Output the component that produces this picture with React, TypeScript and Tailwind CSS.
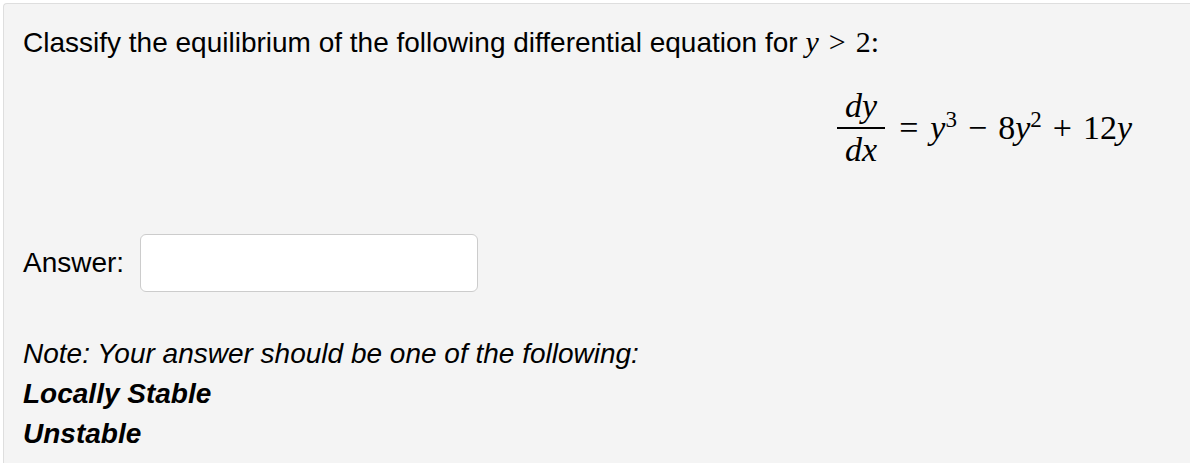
import React from "react";

const sans = { fontFamily: '"Liberation Sans", Arial, sans-serif' };
const serif = { fontFamily: '"Liberation Serif", "Times New Roman", serif' };

function Var({ children }: { children: React.ReactNode }) {
  return <span className="italic">{children}</span>;
}

function Op({ children }: { children: React.ReactNode }) {
  return <span className="mx-[11px]">{children}</span>;
}

export default function App() {
  return (
    <div className="min-h-[463px] bg-white pl-[3px] pt-[3px]" style={sans}>
      <div className="min-h-[460px] rounded-tl-[4px] border-l border-t border-[#dedede] bg-[#f4f4f4] pl-[19px] pt-[22px] text-[28px] leading-[32px] text-black">
        <p>
          Classify the equilibrium of the following differential equation for{" "}
          <span style={serif} className="text-[30px]">
            <Var>y</Var>
            <span className="mx-[10px]">&gt;</span>2:
          </span>
        </p>

        <div className="flex justify-end pr-[58px] pt-[30px]" style={serif}>
          <div className="flex items-center text-[34px]">
            <div className="flex flex-col items-center">
              <span className="leading-[34px]">
                <Var>dy</Var>
              </span>
              <span className="my-[4px] h-[1.5px] w-[48px] bg-black" />
              <span className="leading-[34px]">
                <Var>dx</Var>
              </span>
            </div>
            <span className="ml-[14px] whitespace-nowrap">
              =<span className="ml-[12px]" />
              <Var>y</Var>
              <sup className="text-[23px]">3</sup>
              <Op>−</Op>8<Var>y</Var>
              <sup className="text-[23px]">2</sup>
              <Op>+</Op>12<Var>y</Var>
            </span>
          </div>
        </div>

        <div className="flex items-center gap-[16px] pt-[67px]">
          <span>Answer:</span>
          <input
            type="text"
            className="h-[58px] w-[338px] rounded-[6px] border-[1.5px] border-[#cccccc] bg-white outline-none"
          />
        </div>

        <div className="pt-[42px] italic leading-[40px]">
          <p>Note: Your answer should be one of the following:</p>
          <p className="font-bold">Locally Stable</p>
          <p className="font-bold">Unstable</p>
        </div>
      </div>
    </div>
  );
}
